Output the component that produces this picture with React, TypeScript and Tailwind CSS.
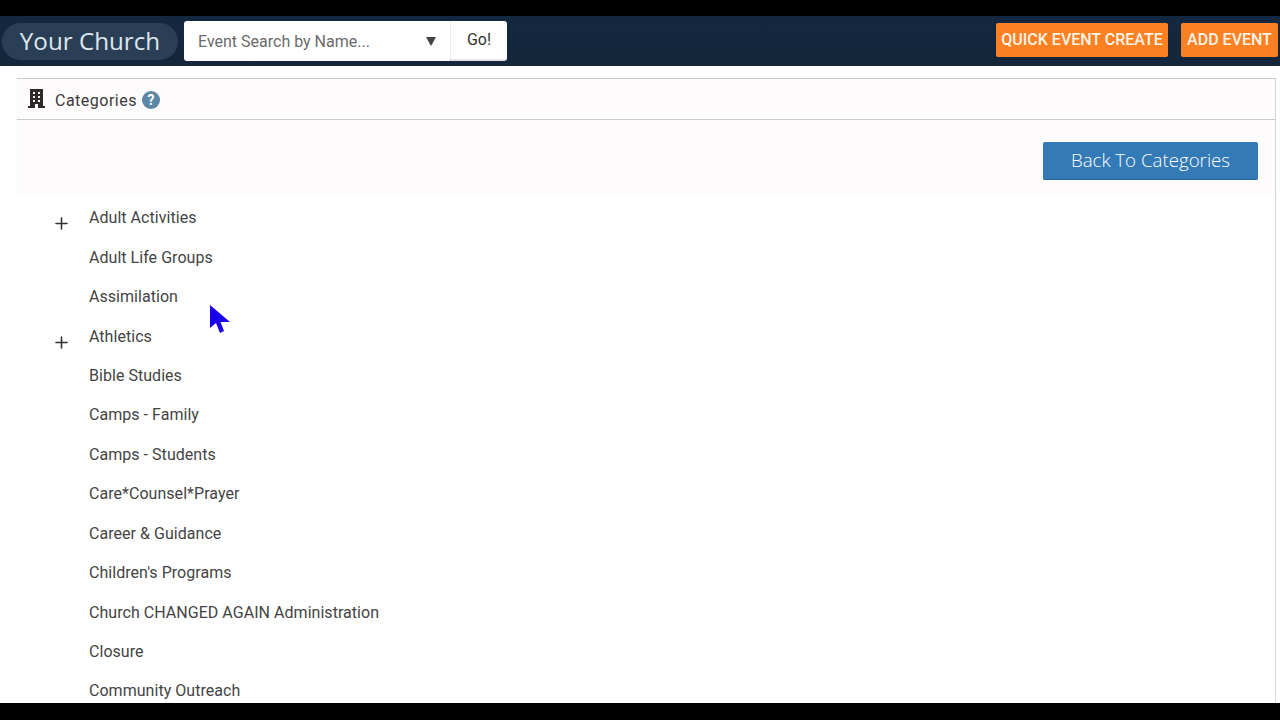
import { Plus } from "lucide-react";

const categories = [
  { name: "Adult Activities", expandable: true },
  { name: "Adult Life Groups" },
  { name: "Assimilation" },
  { name: "Athletics", expandable: true },
  { name: "Bible Studies" },
  { name: "Camps - Family" },
  { name: "Camps - Students" },
  { name: "Care*Counsel*Prayer" },
  { name: "Career & Guidance" },
  { name: "Children's Programs" },
  { name: "Church CHANGED AGAIN Administration" },
  { name: "Closure" },
  { name: "Community Outreach" },
];

function TopBar() {
  return (
    <header className="flex h-[50px] shrink-0 items-center bg-gradient-to-b from-[#132840] to-[#14263b] pl-[2px] pr-[2px]">
      <div className="flex h-[37px] w-[176px] items-center justify-center rounded-full bg-[#2a3f56] font-['Open_Sans',sans-serif] text-[24.2px] text-[#dfe6ec]">
        Your Church
      </div>
      <div className="ml-[6px] flex h-[40px] w-[266px] items-center rounded-l-[3px] bg-white">
        <span className="ml-[14px] flex-1 pt-[1px] font-['Roboto',sans-serif] text-[16px] text-[#6b6b6b]">Event Search by Name...</span>
        <span className="mr-[14px] h-0 w-0 border-x-[5.5px] border-t-[9px] border-x-transparent border-t-[#444]" />
      </div>
      <button className="h-[40px] w-[57px] rounded-r-[3px] border-b-2 border-l border-b-[#e4e4e4] border-l-[#eeeeee] bg-white font-['Roboto',sans-serif] text-[16px] text-[#333]">
        Go!
      </button>
      <div className="ml-auto mb-[2px] flex gap-[13px]">
        <button className="h-[34px] w-[172px] rounded-[2px] bg-[#fd8023] font-['Roboto',sans-serif] text-[16px] font-medium text-[#fdf3e6]">
          QUICK EVENT CREATE
        </button>
        <button className="h-[34px] w-[97px] rounded-[2px] bg-[#fd8023] font-['Roboto',sans-serif] text-[16px] font-medium text-[#fdf3e6]">
          ADD EVENT
        </button>
      </div>
    </header>
  );
}

export default function App() {
  return (
    <div className="flex h-[720px] w-[1280px] flex-col overflow-hidden bg-black font-['Roboto',sans-serif]">
      <div className="h-[16px] shrink-0" />
      <TopBar />
      <main className="relative h-[637px] shrink-0 overflow-hidden bg-white pt-[12px] pl-[17px] pr-[4px]">
        <div className="h-full border-r border-r-[#d4d4d4]">
          <section className="border-t border-t-[#c9c9c9] bg-[#fefbfc]">
            <div className="flex h-[41px] items-center border-b border-[#cccccc] pl-[11px]">
              <svg width="17" height="19" viewBox="0 0 17 19" className="mb-[1px]">
                <path
                  fillRule="evenodd"
                  d="M2 0H15V17H17V19H10V15H7V19H0V17H2ZM5 3V5H7V3ZM10 3V5H12V3ZM5 7V9H7V7ZM10 7V9H12V7ZM5 11V13H7V11ZM10 11V13H12V11Z"
                  fill="#2e2a28"
                />
              </svg>
              <span className="ml-[10px] pt-[3px] text-[16px] tracking-[0.5px] text-[#3a3a3a]">Categories</span>
              <span className="ml-[5px] mt-[2px] flex h-[18px] w-[18px] items-center justify-center rounded-full bg-[#5b86a6] pt-[1px] text-[14px] font-bold text-white">
                ?
              </span>
            </div>
            <div className="flex h-[77px] items-start justify-end pr-[17px] pt-[22px]">
              <button className="h-[38px] w-[215px] rounded-[2px] border-b border-[#2a6496] bg-[#337ab7] font-['Open_Sans',sans-serif] text-[18.7px] font-light text-white">
                Back To Categories
              </button>
            </div>
          </section>
          <ul className="ml-[35px] pt-[1.2px]">
            {categories.map((c) => (
              <li key={c.name} className="flex h-[39.45px] items-start pt-[10px]">
                <span className="flex w-[37px] pt-[6px]">
                  {c.expandable ? <Plus size={19} strokeWidth={2} className="text-[#333]" /> : null}
                </span>
                <span className="text-[16px] leading-[20px] tracking-[0.04px] text-[#444]">{c.name}</span>
              </li>
            ))}
          </ul>
        </div>
        {/* mouse pointer caught in the recording */}
        <svg className="absolute left-[208px] top-[237px]" width="24" height="32" viewBox="0 0 24 32">
          <path d="M2 2 L2 25 L8 20 L12 30 L16 28 L12.5 19 L22 19 Z" fill="#1a00e8" />
        </svg>
      </main>
    </div>
  );
}
